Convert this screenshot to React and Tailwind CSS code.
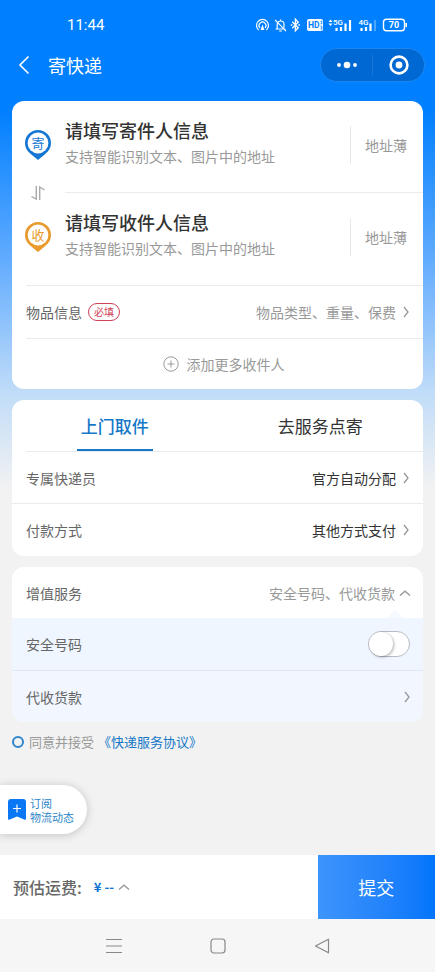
import React, { useState } from "react";

const ADDRESSES = [
  {
    mark: "寄",
    title: "请填写寄件人信息",
    pin: "text-[#1577d3]",
  },
  {
    mark: "收",
    title: "请填写收件人信息",
    pin: "text-[#e89a2c]",
  },
];

const TABS = ["上门取件", "去服务点寄"];

const PICKUP_ROWS = [
  { label: "专属快递员", value: "官方自动分配" },
  { label: "付款方式", value: "其他方式支付" },
];

function ChevronRight() {
  return (
    <svg
      className="h-3 w-2 shrink-0 text-[#999]"
      viewBox="0 0 8 12"
      fill="none"
      stroke="currentColor"
      strokeWidth="1.3"
    >
      <path d="M2 1l4 5-4 5" />
    </svg>
  );
}

function ChevronUp() {
  return (
    <svg
      className="h-2 w-3 shrink-0 text-[#999]"
      viewBox="0 0 12 8"
      fill="none"
      stroke="currentColor"
      strokeWidth="1.4"
    >
      <path d="M1 6.5l5-4.3 5 4.3" />
    </svg>
  );
}

function StatusIcons() {
  return (
    <svg
      className="h-4 w-[154px]"
      viewBox="0 0 154 16"
      fill="none"
      stroke="white"
      strokeWidth="1.2"
      fontFamily="Roboto, sans-serif"
    >
      {/* hotspot */}
      <path d="M3.6 13a6 6 0 1 1 7.8 0" />
      <path d="M5 10.8a3.4 3.4 0 1 1 5 0" />
      <path d="M7.5 7.6l1.9 5.4H5.6z" fill="white" stroke="none" />
      {/* muted bell */}
      <path d="M20.5 12h10M22.2 12V7.4a3.4 3.4 0 0 1 3.4-3.4c2 0 3.4 1.5 3.4 3.4v3.4M25.6 4V2.6M24.2 14h2.8M20 2.8l11 11.4" />
      {/* bluetooth */}
      <path d="M37.2 4.8l6 6-2.8 2.9V2.3l2.8 2.9-6 6M35.8 8h1.6M43.4 8H45" strokeWidth="1.4" />
      {/* HD voice */}
      <rect x="52" y="2" width="16" height="12" rx="2" fill="white" stroke="none" />
      <text x="53" y="11.2" fontSize="8.5" fontWeight="700" fill="#007fff" stroke="none">HD</text>
      <path d="M65.5 4.2h1.3v2.6h-1.3M65.5 9.2h1.3V12h-1.3" stroke="#007fff" strokeWidth="0.9" />
      {/* mobile signal */}
      <path d="M73.5 5l2-2.6 2 2.6zM73.5 6.4l2 2.6 2-2.6z" fill="white" stroke="none" />
      <text x="78" y="7.8" fontSize="8" fontWeight="500" fill="white" stroke="none">5G</text>
      <path d="M81.5 11V14M86 10V14M90.5 6.5V14M95 3V14" strokeWidth="2.2" />
      <text x="103.5" y="7.8" fontSize="8" fontWeight="500" fill="white" stroke="none">4G</text>
      <path d="M106.5 11V14M111 10V14M115.5 6.5V14" strokeWidth="2.2" />
      <path d="M120 3V14" strokeWidth="2" strokeOpacity="0.3" />
      {/* battery */}
      <rect x="128.5" y="2.2" width="21" height="11.6" rx="3" strokeWidth="1.4" />
      <path d="M151.2 6v4" strokeWidth="1.6" />
      <text x="139" y="11.2" fontSize="9" fontWeight="700" textAnchor="middle" fill="white" stroke="none">70</text>
    </svg>
  );
}

function Pin({ mark, color }) {
  return (
    <div className={`relative h-8 w-7 shrink-0 ${color}`}>
      <svg className="h-8 w-7" viewBox="0 0 28 32">
        <path
          d="M14 1A13 13 0 0 0 1 14c0 5 2.6 8.4 6 11.2L14 31l7-5.8c3.4-2.8 6-6.2 6-11.2A13 13 0 0 0 14 1z"
          fill="currentColor"
        />
        <circle cx="14" cy="14" r="10.4" fill="white" />
      </svg>
      <span className="absolute inset-x-0 top-0 text-center text-[13px] leading-7">
        {mark}
      </span>
    </div>
  );
}

function AddressRow({ item, last }) {
  return (
    <div className="flex pl-3">
      <div className="relative flex h-[92px] w-[41px] shrink-0 items-start pt-7">
        <Pin mark={item.mark} color={item.pin} />
        {!last && (
          <button
            type="button"
            aria-label="交换"
            className="absolute left-1 top-[82px] grid h-5 w-5 place-items-center text-[#aaa]"
          >
            <svg
              className="h-4 w-4"
              viewBox="0 0 16 16"
              fill="none"
              stroke="currentColor"
              strokeWidth="1.4"
            >
              <path d="M6.3 1v13L1.5 11.5M9.7 15V2l4.8 3" />
            </svg>
          </button>
        )}
      </div>
      <div
        className={`flex h-[92px] min-w-0 flex-1 justify-between pt-[17px] ${
          last ? "" : "border-b border-[#ebebeb]"
        }`}
      >
        <button type="button" className="flex flex-col items-start">
          <span className="text-lg leading-6 font-medium text-[#333]">
            {item.title}
          </span>
          <span className="mt-1 text-[#999]">支持智能识别文本、图片中的地址</span>
        </button>
        <button
          type="button"
          className="mt-2 h-[38px] shrink-0 border-l border-[#e8e8e8] pl-[14px] pr-4 text-[#999]"
        >
          地址薄
        </button>
      </div>
    </div>
  );
}

export default function App() {
  const [tab, setTab] = useState(0);
  const [safeNumber, setSafeNumber] = useState(false);
  const [agreed, setAgreed] = useState(false);

  return (
    <div className="flex min-h-screen flex-col bg-[#f2f2f2] bg-[linear-gradient(180deg,#007fff_0px,#007fff_110px,#62acff_260px,#c2ddf8_395px,#f2f2f2_490px)] font-['Noto_Sans_CJK_SC',sans-serif] text-[14px] leading-5 text-[#666]">
      <div className="flex h-[45px] items-center justify-between pt-1 pl-[67px] pr-[26px]">
        <span className="font-[Roboto,sans-serif] text-[15px] text-white">11:44</span>
        <StatusIcons />
      </div>

      <header className="flex h-10 items-center pl-4 pr-[10px] text-white">
        <button type="button" aria-label="返回" className="grid h-6 w-4 place-items-center">
          <svg
            className="h-5 w-3"
            viewBox="0 0 12 20"
            fill="none"
            stroke="currentColor"
            strokeWidth="1.6"
          >
            <path d="M10.5 1.5L2 10l8.5 8.5" />
          </svg>
        </button>
        <h1 className="ml-4 flex-1 text-lg">寄快递</h1>
        <div className="flex h-[34px] w-[105px] items-center rounded-full border border-[#1c86f0] bg-[#0068d2]">
          <button type="button" aria-label="更多" className="grid h-full flex-1 place-items-center">
            <svg className="h-2 w-6" viewBox="0 0 24 8" fill="currentColor">
              <circle cx="4" cy="4" r="1.9" />
              <circle cx="12" cy="4" r="3.3" />
              <circle cx="20" cy="4" r="1.9" />
            </svg>
          </button>
          <span className="h-5 w-px bg-[#1976d8]" />
          <button type="button" aria-label="关闭" className="grid h-full flex-1 place-items-center">
            <svg className="h-5 w-5" viewBox="0 0 20 20">
              <circle cx="10" cy="10" r="8.4" fill="none" stroke="currentColor" strokeWidth="2.6" />
              <circle cx="10" cy="10" r="3.4" fill="currentColor" />
            </svg>
          </button>
        </div>
      </header>

      <main className="relative flex-1 px-3 pt-4 pb-24">
        <section className="rounded-xl bg-white">
          {ADDRESSES.map((item, i) => (
            <AddressRow key={item.mark} item={item} last={i === 1} />
          ))}
          <div className="ml-[14px] border-t border-[#ebebeb]">
            <button
              type="button"
              className="flex h-[53px] w-full items-center border-b border-[#ebebeb] pr-[13px]"
            >
              <span>物品信息</span>
              <span className="ml-[6px] rounded-full border border-[#cf3f57] px-[5px] text-[10px] leading-4 text-[#cf3f57]">
                必填
              </span>
              <span className="ml-auto mr-[6px] text-[#999]">物品类型、重量、保费</span>
              <ChevronRight />
            </button>
          </div>
          <button
            type="button"
            className="flex h-[50px] w-full items-center justify-center gap-2 pl-3 text-[#999]"
          >
            <svg
              className="h-4 w-4"
              viewBox="0 0 16 16"
              fill="none"
              stroke="currentColor"
            >
              <circle cx="8" cy="8" r="7.2" />
              <path d="M8 4.5v7M4.5 8h7" />
            </svg>
            添加更多收件人
          </button>
        </section>

        <section className="mt-[11px] rounded-xl bg-white">
          <div role="tablist" className="ml-[14px] flex border-b border-[#ebebeb] pr-[14px]">
            {TABS.map((name, i) => (
              <button
                key={name}
                type="button"
                role="tab"
                aria-selected={tab === i}
                onClick={() => setTab(i)}
                className="flex flex-1 justify-center first:mr-7"
              >
                <span
                  className={`h-[51px] border-b-2 px-1 text-[17px] leading-[52px] ${
                    tab === i
                      ? "border-[#1577c8] font-medium text-[#1577c8]"
                      : "border-transparent text-[#333]"
                  }`}
                >
                  {name}
                </span>
              </button>
            ))}
          </div>
          {PICKUP_ROWS.map((row) => (
            <button
              key={row.label}
              type="button"
              className="flex h-[52px] w-full items-center border-b border-[#ebebeb] pl-[14px] pr-[13px] last:border-b-0"
            >
              <span>{row.label}</span>
              <span className="ml-auto mr-[6px] text-[#333]">{row.value}</span>
              <ChevronRight />
            </button>
          ))}
        </section>

        <section className="mt-[11px] overflow-hidden rounded-xl bg-white">
          <button
            type="button"
            className="relative flex h-[51px] w-full items-center pl-[14px] pr-3"
          >
            <span>增值服务</span>
            <span className="ml-auto mr-1 text-[#999]">安全号码、代收货款</span>
            <ChevronUp />
            <svg className="absolute right-5 bottom-0 h-2 w-4" viewBox="0 0 16 8">
              <path d="M0 8l8-8 8 8z" fill="#f4faff" />
            </svg>
          </button>
          <div className="bg-[#eff6ff]">
            <label className="flex h-[53px] items-center justify-between border-b border-[#e2e8f2] pl-[14px] pr-[13px]">
              <span>安全号码</span>
              <span className="relative flex">
                <input
                  type="checkbox"
                  checked={safeNumber}
                  onChange={(e) => setSafeNumber(e.target.checked)}
                  className="peer h-[26px] w-[42px] appearance-none rounded-full border border-[#b8bcc2] bg-white checked:bg-[#007fff]"
                />
                <span className="pointer-events-none absolute top-px left-px h-6 w-6 rounded-full bg-white shadow-[1px_1px_3px_rgba(0,0,0,0.3)] peer-checked:left-[17px]" />
              </span>
            </label>
            <button
              type="button"
              className="flex h-[51px] w-full items-center justify-between bg-[#f1f6ff] pl-[14px] pr-3"
            >
              <span>代收货款</span>
              <ChevronRight />
            </button>
          </div>
        </section>

        <div className="mt-[10px] flex items-center gap-1 text-[13px]">
          <label className="flex items-center gap-[5px] text-[#999]">
            <input
              type="checkbox"
              checked={agreed}
              onChange={(e) => setAgreed(e.target.checked)}
              className="h-3 w-3 appearance-none rounded-full border-2 border-[#2b86cf] checked:bg-[#2b86cf]"
            />
            同意并接受
          </label>
          <a href="#agreement" className="text-[#1577c8]">
            《快递服务协议》
          </a>
        </div>

        <button
          type="button"
          className="absolute bottom-[21px] left-0 flex h-[49px] w-[87px] items-center gap-1 rounded-r-full bg-white pl-2 text-left text-[11px] leading-[14px] text-[#2b86c9] shadow-[0_1px_10px_rgba(0,0,0,0.2)]"
        >
          <svg className="h-[21px] w-[18px] shrink-0" viewBox="0 0 18 21">
            <path
              d="M3 0h12a3 3 0 0 1 3 3v16.5c0 1.2-.8 1.6-1.8 1L9 17.6l-7.2 2.9c-1 .6-1.8.2-1.8-1V3a3 3 0 0 1 3-3z"
              fill="#0a78f5"
            />
            <path d="M9 5.5v8M5 9.5h8" stroke="white" strokeWidth="1.2" />
          </svg>
          <span className="flex flex-col">
            <span>订阅</span>
            <span>物流动态</span>
          </span>
        </button>
      </main>

      <footer className="bg-white">
        <div className="flex h-16 items-center">
          <span className="ml-[13px] text-base font-medium">预估运费:</span>
          <button type="button" className="ml-3 flex items-center gap-1 text-[#1577d3]">
            <span className="text-[13px] font-bold">¥ --</span>
            <ChevronUp />
          </button>
          <button
            type="button"
            className="ml-auto h-full w-[27%] bg-linear-to-r from-[#3d94fb] to-[#0075fb] text-lg text-white"
          >
            提交
          </button>
        </div>
        <nav className="flex h-[53px] items-center justify-center gap-[88px] bg-[#f6f6f6] text-[#888]">
          <button type="button" aria-label="最近任务">
            <svg className="h-4 w-4" viewBox="0 0 16 16" stroke="currentColor" strokeWidth="1.2">
              <path d="M0 1.5h16M0 8h16M0 14.5h16" />
            </svg>
          </button>
          <button type="button" aria-label="主屏幕">
            <svg className="h-4 w-4" viewBox="0 0 16 16" fill="none" stroke="currentColor" strokeWidth="1.2">
              <rect x="1" y="1" width="14" height="14" rx="3" />
            </svg>
          </button>
          <button type="button" aria-label="后退">
            <svg
              className="h-4 w-4"
              viewBox="0 0 16 16"
              fill="none"
              stroke="currentColor"
              strokeWidth="1.2"
              strokeLinejoin="round"
            >
              <path d="M14.5 1.2v13.6L1.5 8z" />
            </svg>
          </button>
        </nav>
      </footer>
    </div>
  );
}
